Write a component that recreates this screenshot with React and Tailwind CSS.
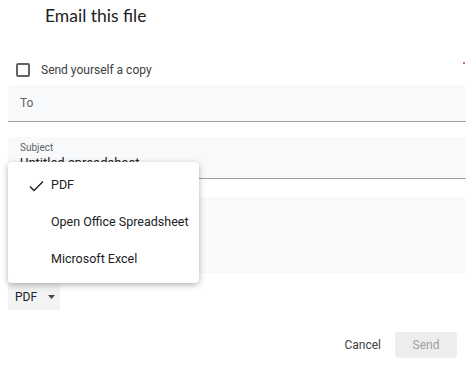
import { useState } from "react";

const FORMATS = ["PDF", "Open Office Spreadsheet", "Microsoft Excel"];

function Field({ label, value, className }) {
  return (
    <div
      className={`mx-[8px] bg-[#f8f9fa] border-b border-[#9aa0a6] rounded-t-[4px] px-[12px] ${className || ""}`}
    >
      {value != null ? (
        <div className="pt-[5px]">
          <div className="text-[10px] leading-[12px] text-[#5f6368]">{label}</div>
          <div className="text-[13px] leading-[18px] text-[#202124]">{value}</div>
        </div>
      ) : (
        label && (
          <div className="h-full flex items-center text-[12px] text-[#5f6368]">{label}</div>
        )
      )}
    </div>
  );
}

export default function App() {
  const [format, setFormat] = useState("PDF");
  const [copy, setCopy] = useState(false);

  return (
    <div
      className="relative w-[474px] h-[367px] bg-white overflow-hidden"
      style={{ fontFamily: "Roboto, 'Liberation Sans', sans-serif" }}
    >
      <h1
        className="h-[32px] flex items-center pl-[45px] text-[17.5px] text-[#202124]"
        style={{ fontFamily: "Lato, Roboto, sans-serif" }}
      >
        Email this file
      </h1>

      <label className="mt-[26px] h-[24px] flex items-center pl-[16px] gap-[11px] cursor-pointer">
        <span
          onClick={() => setCopy(!copy)}
          className="w-[14px] h-[14px] border-2 border-[#5f6368] rounded-[2px]"
        />
        <span className="text-[12px] text-[#3c4043]">Send yourself a copy</span>
      </label>
      <span className="absolute left-[463px] top-[62px] w-[2px] h-[2px] rounded-full bg-[#c0304a]" />

      <Field label="To" className="mt-[3px] h-[37px]" />
      <Field label="Subject" value="Untitled spreadsheet" className="mt-[15px] h-[42px]" />
      <Field className="mt-[18px] h-[76px] border-b-0" />

      <button className="mt-[10px] ml-[8px] h-[27px] w-[52px] bg-[#f1f3f4] rounded-[2px] flex items-center pl-[7px] gap-[11px] text-[12px] text-[#202124]">
        {format}
        <svg width="7" height="4" viewBox="0 0 7 4">
          <path d="M0 0h7L3.5 4z" fill="#444746" />
        </svg>
      </button>

      <div className="mt-[22px] flex justify-end items-center pr-[17px] gap-[14px]">
        <button className="text-[12px] text-[#3c4043]">Cancel</button>
        <button className="w-[62px] h-[26px] bg-[#ededed] rounded-[3px] text-[12px] text-[#a0a0a0]">
          Send
        </button>
      </div>

      <div className="absolute left-[8px] top-[162px] w-[191px] py-[5px] bg-white rounded-[4px] shadow-[0_2px_6px_rgba(0,0,0,0.3)]">
        {FORMATS.map((f) => (
          <div
            key={f}
            onClick={() => setFormat(f)}
            className="h-[37px] flex items-center cursor-pointer"
          >
            <span className="w-[43px] flex justify-end pr-[7px]">
              {f === format && (
                <svg width="15" height="12" viewBox="0 0 15 12">
                  <path d="M1 6.5l4 4L14 1.5" fill="none" stroke="#202124" strokeWidth="1.4" />
                </svg>
              )}
            </span>
            <span className="text-[12.5px] text-[#202124]">{f}</span>
          </div>
        ))}
      </div>
    </div>
  );
}
